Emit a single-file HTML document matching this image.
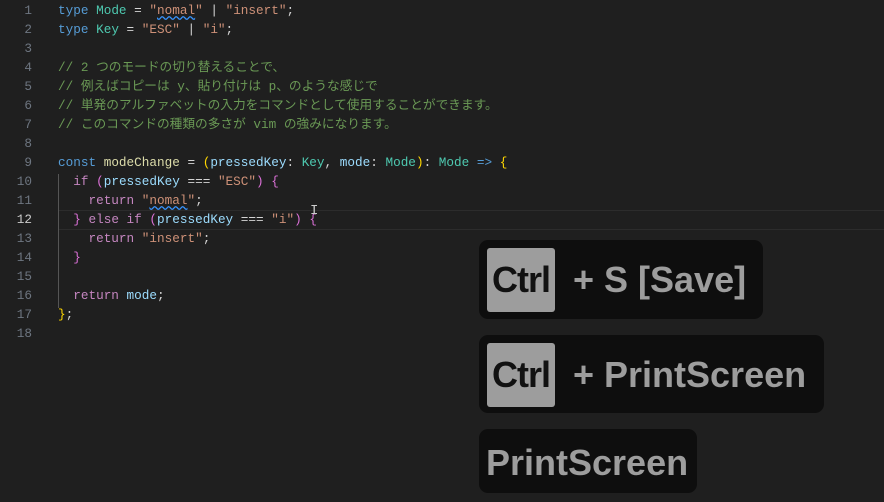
<!DOCTYPE html>
<html><head><meta charset="utf-8"><style>
body{margin:0;width:884px;height:502px;background:#1f1f1f;overflow:hidden;position:relative;font-family:"Liberation Mono","Noto Sans CJK JP",monospace;font-size:12.7px}
.l{position:absolute;left:0;height:19px;line-height:19px;white-space:pre;width:884px}
.n{position:absolute;left:0;width:32px;text-align:right;color:#6e7681}
.c{position:absolute;left:58px;color:#d4d4d4}
.k{color:#569cd6}.t{color:#4ec9b0}.s{color:#ce9178}.cm{color:#6a9955}.f{color:#dcdcaa}.v{color:#9cdcfe}.p{color:#c586c0}.y{color:#ffd700}.m{color:#da70d6}.b{color:#179fff}
.sq{text-decoration:underline wavy #3794ff}
.box{position:absolute;background:#0e0e0e;border-radius:9px;font-family:"Liberation Sans",sans-serif;font-weight:bold;color:#9d9d9d;font-size:36px;line-height:64px;white-space:nowrap}
.key{display:inline-block;background:#9d9d9d;color:#111;border-radius:3px;width:68px;text-align:center;height:64px;vertical-align:top;letter-spacing:-1px}
</style></head><body>
<div style="position:absolute;left:58px;top:210px;width:826px;height:18px;border-top:1px solid #2c2c2c;border-bottom:1px solid #2c2c2c"></div>
<div style="position:absolute;left:58px;top:174px;width:1px;height:134px;background:#555"></div>
<div class="l" style="top:1px"><span class="n">1</span><span class="c"><span class="k">type</span> <span class="t">Mode</span> = <span class="s">"<span class="sq">nomal</span>"</span> | <span class="s">"insert"</span>;</span></div>
<div class="l" style="top:20px"><span class="n">2</span><span class="c"><span class="k">type</span> <span class="t">Key</span> = <span class="s">"ESC"</span> | <span class="s">"i"</span>;</span></div>
<div class="l" style="top:39px"><span class="n">3</span></div>
<div class="l" style="top:58px"><span class="n">4</span><span class="c cm">// 2 つのモードの切り替えることで、</span></div>
<div class="l" style="top:77px"><span class="n">5</span><span class="c cm">// 例えばコピーは y、貼り付けは p、のような感じで</span></div>
<div class="l" style="top:96px"><span class="n">6</span><span class="c cm">// 単発のアルファベットの入力をコマンドとして使用することができます。</span></div>
<div class="l" style="top:115px"><span class="n">7</span><span class="c cm">// このコマンドの種類の多さが vim の強みになります。</span></div>
<div class="l" style="top:134px"><span class="n">8</span></div>
<div class="l" style="top:153px"><span class="n">9</span><span class="c"><span class="k">const</span> <span class="f">modeChange</span> = <span class="y">(</span><span class="v">pressedKey</span>: <span class="t">Key</span>, <span class="v">mode</span>: <span class="t">Mode</span><span class="y">)</span>: <span class="t">Mode</span> <span class="k">=&gt;</span> <span class="y">{</span></span></div>
<div class="l" style="top:172px"><span class="n">10</span><span class="c">  <span class="p">if</span> <span class="m">(</span><span class="v">pressedKey</span> === <span class="s">"ESC"</span><span class="m">)</span> <span class="m">{</span></span></div>
<div class="l" style="top:191px"><span class="n">11</span><span class="c">    <span class="p">return</span> <span class="s">"<span class="sq">nomal</span>"</span>;</span></div>
<div class="l" style="top:210px"><span class="n" style="color:#ccc">12</span><span class="c">  <span class="m">}</span> <span class="p">else if</span> <span class="m">(</span><span class="v">pressedKey</span> === <span class="s">"i"</span><span class="m">)</span> <span class="m">{</span></span></div>
<div class="l" style="top:229px"><span class="n">13</span><span class="c">    <span class="p">return</span> <span class="s">"insert"</span>;</span></div>
<div class="l" style="top:248px"><span class="n">14</span><span class="c">  <span class="m">}</span></span></div>
<div class="l" style="top:267px"><span class="n">15</span></div>
<div class="l" style="top:286px"><span class="n">16</span><span class="c">  <span class="p">return</span> <span class="v">mode</span>;</span></div>
<div class="l" style="top:305px"><span class="n">17</span><span class="c"><span class="y">}</span>;</span></div>
<div class="l" style="top:324px"><span class="n">18</span></div>
<div style="position:absolute;left:310px;top:203px;color:#ccc;font-size:14px">I</div>
<div class="box" style="left:479px;top:240px;width:284px;height:79px"><div style="position:absolute;left:8px;top:8px"><span class="key">Ctrl</span><span style="margin-left:18px">+ S [Save]</span></div></div>
<div class="box" style="left:479px;top:335px;width:345px;height:78px"><div style="position:absolute;left:8px;top:8px"><span class="key">Ctrl</span><span style="margin-left:18px">+ PrintScreen</span></div></div>
<div class="box" style="left:479px;top:429px;width:218px;height:64px"><div style="position:absolute;left:7px;top:2px">PrintScreen</div></div>
</body></html>
